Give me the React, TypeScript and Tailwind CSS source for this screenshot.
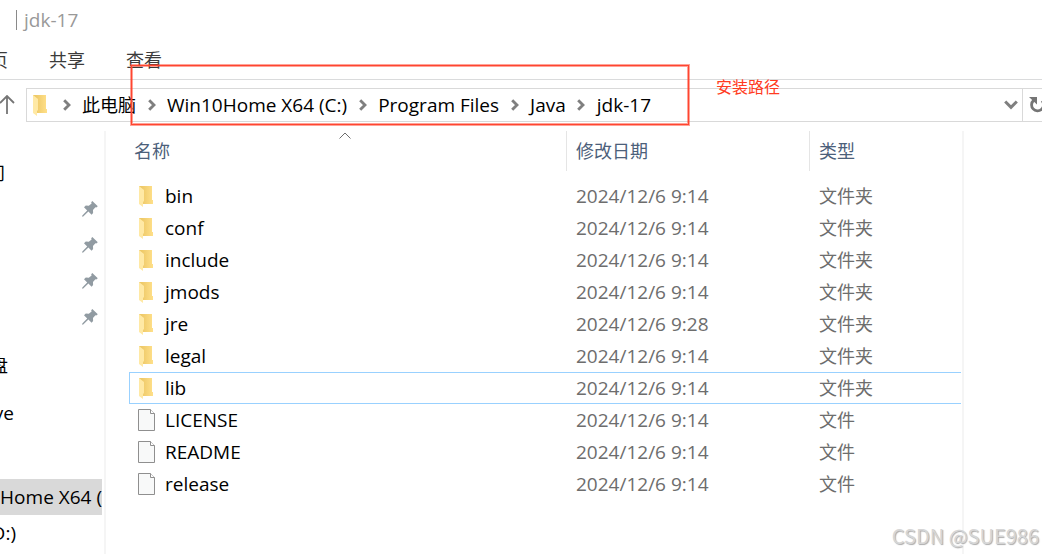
import React, { FC, Fragment } from "react";

type Entry = {
  name: string;
  date: string;
  folder: boolean;
};

const entries: Entry[] = [
  { name: "bin", date: "2024/12/6 9:14", folder: true },
  { name: "conf", date: "2024/12/6 9:14", folder: true },
  { name: "include", date: "2024/12/6 9:14", folder: true },
  { name: "jmods", date: "2024/12/6 9:14", folder: true },
  { name: "jre", date: "2024/12/6 9:28", folder: true },
  { name: "legal", date: "2024/12/6 9:14", folder: true },
  { name: "lib", date: "2024/12/6 9:14", folder: true },
  { name: "LICENSE", date: "2024/12/6 9:14", folder: false },
  { name: "README", date: "2024/12/6 9:14", folder: false },
  { name: "release", date: "2024/12/6 9:14", folder: false },
];

const crumbs = ["Win10Home X64 (C:)", "Program Files", "Java", "jdk-17"];

const FolderIcon: FC = () => (
  <svg width="15" height="22" viewBox="-1 -1 15 22" className="shrink-0">
    <defs>
      <linearGradient id="folder-back" x1="0" x2="1">
        <stop offset="0.2" stopColor="#eec968" />
        <stop offset="1" stopColor="#ffe08a" />
      </linearGradient>
    </defs>
    <path d="M0 0H13V14H14V18H4L0 17Z" fill="url(#folder-back)" />
    <path d="M0 0L5 4V15L4 16V21L0 18Z" fill="#ffe9a5" />
  </svg>
);

const FileIcon: FC = () => (
  <svg width="17" height="22" viewBox="0 0 17 22" className="shrink-0">
    <path d="M0.5 0.5H12.5L16.5 4.5V21.5H0.5Z" fill="#f8f9f9" stroke="#8f8f8f" />
    <path d="M12.5 0.5V4.5H16.5" fill="#fff" stroke="#8f8f8f" />
  </svg>
);

const PinIcon: FC = () => (
  <svg width="16" height="16" viewBox="0 0 16 16" fill="#919ba2">
    <path d="M10.3 0L15.8 5.3L14.3 6.4L13.4 6.3L11 9L11.1 12L9.6 13.8L6.4 10.6L1.2 15.5L0.2 15.8L0.3 14.6L5.2 9.4L2 6.2L3.8 4.6L6.8 4.7L9.6 2.4L9.2 1.2Z" />
  </svg>
);

const Chevron: FC = () => (
  <svg width="8" height="12" viewBox="0 0 8 12" fill="none" stroke="#7f7f7f" strokeWidth="2.9">
    <path d="M1.2 1.2L6 6L1.2 10.8" />
  </svg>
);

const Separator: FC = () => (
  <span className="flex w-[31px] shrink-0 justify-center">
    <Chevron />
  </span>
);

// label whose beginning runs off the left side of the window
const CutLabel: FC<{ text: string; className: string }> = ({ text, className }) => (
  <div className={`flex h-9 items-center justify-end overflow-hidden whitespace-nowrap ${className}`}>
    <a href="#">{text}</a>
  </div>
);

const Sidebar: FC = () => (
  <aside className="w-[106px] shrink-0 border-r-2 border-[#f5f5f5] pt-6 text-[19px]">
    <CutLabel text="快速访问" className="w-[5px] text-lg" />
    {[1, 2, 3, 4].map((n) => (
      <div key={n} className="flex h-9 items-center justify-end pr-1.5">
        <PinIcon />
      </div>
    ))}
    <CutLabel text="WPS网盘" className="mt-3 w-2 text-lg" />
    <CutLabel text="OneDrive" className="mt-3 w-3.5" />
    <CutLabel text="Win10Home X64 (" className="mt-12 w-[102px] bg-[#d9d9d9]" />
    <CutLabel text="(D:)" className="w-4" />
  </aside>
);

const FileTable: FC = () => (
  <table className="w-full table-fixed border-separate border-spacing-0 text-left">
    <thead>
      <tr className="text-lg text-[#4c607a]">
        <th className="relative w-[437px] p-0 pb-[9px] font-normal">
          <svg
            width="12"
            height="7"
            viewBox="0 0 12 7"
            fill="none"
            stroke="#6d6d6d"
            className="absolute top-px right-[215px]"
          >
            <path d="M0.5 6.5L6 1L11.5 6.5" />
          </svg>
          <button className="flex h-10 items-center pl-[5px]">名称</button>
        </th>
        <th className="w-[243px] p-0 pb-[9px] font-normal">
          <button className="flex h-10 items-center border-l border-[#e5e5e5] pl-[9px]">修改日期</button>
        </th>
        <th className="p-0 pb-[9px] font-normal">
          <button className="flex h-10 items-center border-l border-[#e5e5e5] pl-[9px]">类型</button>
        </th>
      </tr>
    </thead>
    <tbody>
      {entries.map(({ name, date, folder }) => {
        const line = name === "lib" ? "border-y border-[#99d1ff]" : "border-y border-transparent";
        return (
          <tr key={name}>
            <td className={`h-8 border-l p-0 ${line}`}>
              <div className="flex items-center pl-2 text-[19px] leading-none text-black">
                <span className="flex w-[27px] shrink-0">{folder ? <FolderIcon /> : <FileIcon />}</span>
                {name}
              </div>
            </td>
            <td className={`p-0 pl-2.5 text-[19px] leading-none text-[#6d6d6d] ${line}`}>{date}</td>
            <td className={`p-0 pl-2.5 text-lg leading-none text-[#6d6d6d] ${line}`}>
              {folder ? "文件夹" : "文件"}
            </td>
          </tr>
        );
      })}
    </tbody>
  </table>
);

const App: FC = () => {
  return (
    <div className="relative flex min-h-screen flex-col overflow-hidden bg-white font-['Open_Sans','Noto_Sans_CJK_SC',sans-serif]">
      <header className="flex h-10 items-center pl-4 text-[19px] text-[#999999]">
        <span className="h-5 border-l border-[#8a8a8a] pr-[7px]" />
        <h1>jdk-17</h1>
      </header>

      <nav className="flex h-10 items-center gap-[41px] border-b border-[#dadbdc] text-lg text-[#3b3b3b]">
        <CutLabel text="主页" className="w-2" />
        <button>共享</button>
        <button>查看</button>
      </nav>

      <div className="mt-2 flex items-stretch">
        <button aria-label="Up" className="w-[26px]">
          <svg width="16" height="20" viewBox="0 0 16 20" fill="none" stroke="#757575" strokeWidth="1.8">
            <path d="M7 19V1M0 8L7 1L14 8" />
          </svg>
        </button>
        <div className="flex h-[34px] flex-1 items-center border border-r-0 border-[#d9d9d9] pl-[5px] text-[19px]">
          <FolderIcon />
          <span className="flex w-[35px] justify-center pl-1">
            <Chevron />
          </span>
          <button className="text-lg">此电脑</button>
          {crumbs.map((crumb) => (
            <Fragment key={crumb}>
              <Separator />
              <button className="whitespace-nowrap">{crumb}</button>
            </Fragment>
          ))}
          <button aria-label="History" className="mr-1 ml-auto">
            <svg width="14" height="10" viewBox="0 0 14 10" fill="none" stroke="#7f7f7f" strokeWidth="3">
              <path d="M1.2 1.5L7 7.3L12.8 1.5" />
            </svg>
          </button>
        </div>
        <button
          aria-label="Refresh"
          className="flex w-5 items-center overflow-hidden border border-r-0 border-[#d9d9d9] pl-1.5"
        >
          <svg width="18" height="18" viewBox="0 0 18 18" fill="none" className="shrink-0">
            <path d="M4.6 4.4A6 6 0 1 0 13 4.8" stroke="#757575" strokeWidth="2.8" />
            <path d="M0 1H8V8.5Z" fill="#757575" />
          </svg>
        </button>
      </div>

      <main className="mt-[9px] flex flex-1">
        <Sidebar />
        <div className="mr-[78px] flex-1 border-r-2 border-[#f5f5f5] pr-px pl-[23px]">
          <FileTable />
        </div>
      </main>

      {/* red note on the install path */}
      <div className="pointer-events-none absolute top-[65px] left-[131px] h-[60px] w-[558px] border border-[#ff4530] shadow-[0_0_0_1px_#ff453080,inset_0_0_0_1px_#ff453080]" />
      <p className="absolute top-[75px] left-[716px] text-base text-[#ff3b22]">安装路径</p>

      <p className="absolute right-[3px] bottom-1 font-['Noto_Sans_CJK_SC',sans-serif] text-xl leading-7 text-[#d6d6d6] [text-shadow:1px_1px_1px_#aaa]">
        CSDN @SUE986
      </p>
    </div>
  );
};

export default App;
